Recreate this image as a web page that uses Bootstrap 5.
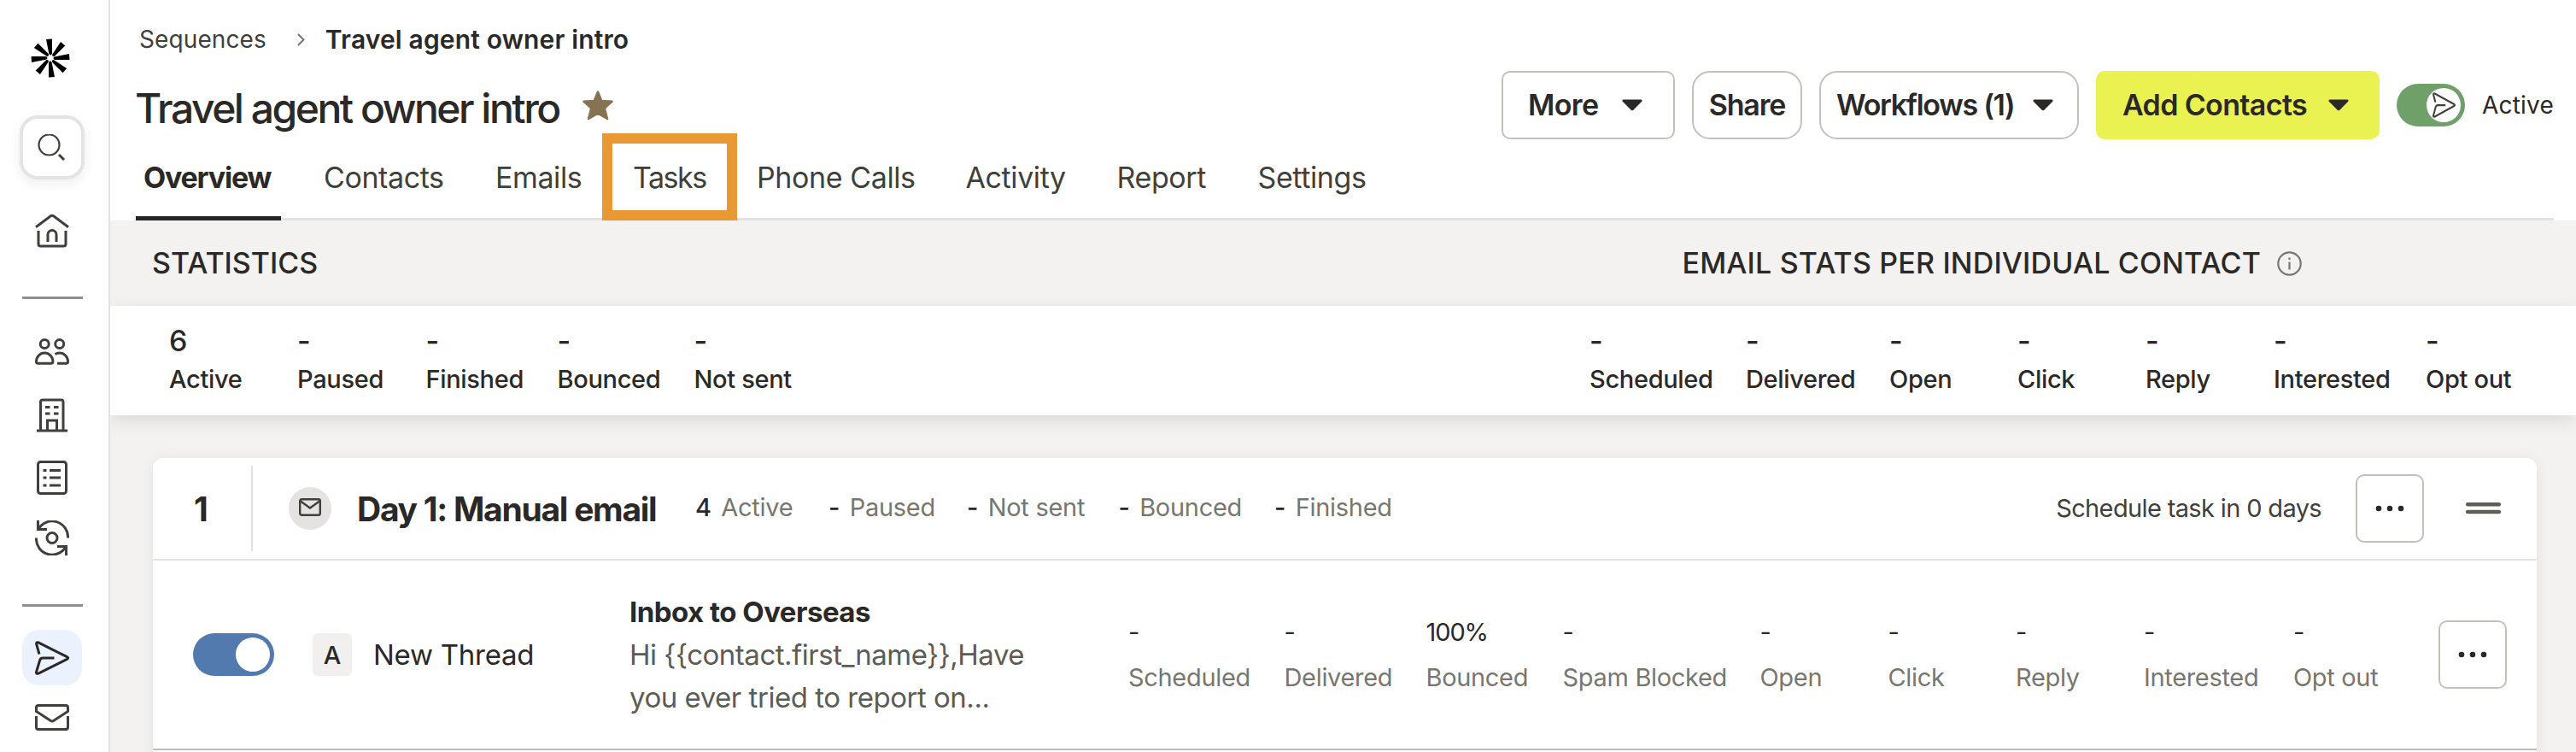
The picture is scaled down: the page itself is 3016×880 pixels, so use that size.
<!DOCTYPE html>
<html lang="en">
<head>
<meta charset="utf-8">
<title>Travel agent owner intro</title>
<link href="https://cdn.jsdelivr.net/npm/bootstrap@5.3.0/dist/css/bootstrap.min.css" rel="stylesheet">
<style>
  :root { --ink:#2a2927; --ink-soft:#3f3f3b; --muted:#77776f; --line:#e2e2e0; --edge:#c2c2bd; --band:#f3f2f0; }
  body { width:3016px; height:880px; overflow:hidden; background:var(--band); color:var(--ink);
         font-family:Inter,"Liberation Sans",sans-serif; font-size:29px; line-height:1; white-space:nowrap; }
  svg { display:block; flex:none; }
  .line-icon { fill:none; stroke:var(--ink-soft); stroke-width:3; }

  .rail { width:129px; border-right:2px solid var(--line); padding:45px 5px 0 0; }
  .rail-logo { margin-right:5px; }
  .rail-search { width:76px; height:75px; margin-top:44px; border:4px solid #e4e4e3; border-radius:21px; box-shadow:0 5px 14px rgba(0,0,0,.07); padding:18px 0 0 17px; }
  .rail-rule { width:71px; height:3px; background:#90908b; margin-top:57px; }
  .rail-active { width:70px; height:65px; border-radius:20px; background:#ebf2fd; margin-top:27px; }

  .topbar { height:258px; padding:0 26px 0 30px; }
  .trail { height:92px; padding-left:4px; font-size:28px; color:var(--ink-soft); letter-spacing:.1px; }
  .trail-now { font-size:30px; font-weight:600; color:var(--ink); letter-spacing:.15px; margin-left:24px; }
  .title-row { height:62px; }
  .page-title { font-size:48px; font-weight:500; letter-spacing:-2.5px; margin:7px 0 0 -1px; line-height:56px; }
  .actions { gap:20px; }
  .act { height:80px; border:2px solid var(--edge); border-radius:10px; font-size:34px; font-weight:600; background:#fff; }
  .act-round { border-radius:21px; }
  .act-more { width:203px; padding:0 36px 0 29px; letter-spacing:-.6px; }
  .act-share { width:129px; letter-spacing:-1.15px; }
  .act-flow { width:304px; padding:0 28px 0 18px; letter-spacing:-1.3px; }
  .act-add { width:332px; padding:0 34px 0 29px; background:#eaf251; border-color:#eaf251; letter-spacing:-.64px; }
  .pill { height:50px; border-radius:25px; padding:5px; }
  .pill-green { width:80px; background:#70a06a; }
  .pill-blue { width:95px; background:#527aae; }
  .knob { width:40px; height:40px; border-radius:50%; background:#fff; }
  .act-state { width:84px; font-size:28px; letter-spacing:.2px; }

  .tabs { display:grid; grid-template-columns:220px 201px 161px 145px 244.5px 177px 165px 1fr; height:104px; border-bottom:3px solid var(--line);
          font-size:34px; line-height:108px; color:var(--ink-soft); letter-spacing:-.4px; }
  .tab-on { width:170px; height:104px; padding-left:9px; font-weight:700; color:var(--ink); letter-spacing:-1.2px; box-shadow:inset 0 -5px #252523; }
  .tab-tight { letter-spacing:-1.5px; }
  .callout { position:absolute; left:-36px; top:2px; width:158px; height:102px; border:12px solid #e99934; }

  .band { height:100px; padding:0 321px 0 49px; font-size:34px; font-weight:500; }
  .band-mail { letter-spacing:.17px; gap:19px; }
  .totals { height:128px; padding:18px 74px 0 69px; font-weight:500; letter-spacing:-.33px; box-shadow:0 6px 20px rgba(0,0,0,.1); position:relative; }
  .totals b { display:block; font-size:34px; font-weight:500; line-height:45px; }
  .totals span { display:block; line-height:46px; }
  .cols-left { display:grid; grid-template-columns:150px 150.5px 154px 160px 120px; }
  .cols-right { display:grid; grid-template-columns:183px 168px 150px 150px 150px 178px 102px; }

  .step { margin:50px 46px 0 50px; height:380px; border-radius:12px; background:#fff; box-shadow:0 2px 16px rgba(0,0,0,.07); }
  .step-head { height:120px; border-bottom:2px solid var(--line); padding-right:42px; }
  .step-no { width:115px; font-size:39px; font-weight:700; padding-left:48px; }
  .vline { width:2px; height:100px; background:var(--line); margin-top:-1px; }
  .kind { width:50px; height:50px; border-radius:50%; background:#e4e3e2; margin-left:42px; }
  .step-name { font-size:39px; font-weight:700; letter-spacing:-1.27px; margin-left:30px; width:396px; }
  .tally { display:grid; grid-template-columns:156px 162px 177.5px 182.5px 140px; color:var(--muted); letter-spacing:-.28px; margin-top:-3px; }
  .tally b { font-weight:500; color:var(--ink); display:inline-block; margin-right:11.5px; }
  .when { color:var(--ink-soft); letter-spacing:-.64px; margin-right:40px; margin-top:-2px; }
  .square { width:80px; height:80px; border:2px solid var(--edge); border-radius:10px; }
  .grip { margin-left:49px; }

  .variant { height:222px; border-bottom:2px solid #bfbfbb; padding:0 35px 0 47px; }
  .letter { width:46px; height:50px; border-radius:6px; background:#f1f0ef; margin-left:45px; font-weight:500; }
  .thread { font-size:33px; letter-spacing:-.25px; width:300px; margin-left:25px; }
  .mail { width:584px; font-size:33px; line-height:50px; color:#5c5c57; letter-spacing:-.48px; }
  .mail strong { font-weight:700; color:var(--ink); letter-spacing:-.52px; }
  .rates { display:grid; grid-template-columns:182.5px 166px 160px 231px 150px 149.5px 150px 175px 170px; color:var(--muted); letter-spacing:-.32px; margin-top:-1px; }
  .rates b, .rates span { display:block; line-height:53px; }
  .rates b { font-weight:400; color:var(--ink); }
  .rates .full { letter-spacing:-1.1px; }
</style>
</head>
<body class="d-flex">
<nav class="rail bg-white flex-shrink-0 d-flex flex-column align-items-center position-relative z-1">
  <svg class="rail-logo" width="46" height="46" viewBox="0 0 46 46"><defs><path id="ray" d="M18 1 25 .5V16.5Q25 19.6 22.7 19.4 21.6 19.2 21.3 17.5Z"/></defs>
    <use href="#ray"/><use href="#ray" transform="rotate(45 23 23)"/><use href="#ray" transform="rotate(90 23 23)"/><use href="#ray" transform="rotate(135 23 23)"/><use href="#ray" transform="rotate(180 23 23)"/><use href="#ray" transform="rotate(225 23 23)"/><use href="#ray" transform="rotate(270 23 23)"/><use href="#ray" transform="rotate(315 23 23)"/></svg>
  <div class="rail-search bg-white"><svg class="line-icon" width="34" height="34" viewBox="0 0 34 34" style="stroke-width:2.2"><circle cx="13.5" cy="12.5" r="12"/><path d="M25 24 31 30" stroke-width="3"/></svg></div>
  <svg class="line-icon" style="margin-top:40px" width="40" height="40" viewBox="0 0 40 40"><path d="M1 15.8 18 3Q20 1.4 22 3L39 15.8M4 20V35.5Q4 38 6.5 38H33.500Q36 38 36 35.500V20M15 33V24.500a5 5 0 0 1 10 0V33"/></svg>
  <div class="rail-rule"></div>
  <svg class="line-icon" style="margin-top:46px" width="40" height="31" viewBox="0 0 40 31"><circle cx="11.200" cy="6.500" r="5"/><circle cx="28.700" cy="6.500" r="5"/><path d="M1.500 27a9.700 10 0 0 1 19.400 0q0 2.300-2 2.300H3.500q-2 0-2-2.300ZM23.500 18.500Q26 17 28.700 17A9.800 10 0 0 1 38.500 27q0 2.300-2 2.300H26"/></svg>
  <svg class="line-icon" style="margin-top:39px" width="36" height="40" viewBox="0 0 36 40"><path d="M4.500 38V4.500Q4.500 2 7 2H28.500Q31 2 31 4.500V38M0 38H36M12.500 38V26H23.500V38M10 10.500h5.500M20 10.500h5.500M10 18h5.500M20 18h5.500"/></svg>
  <svg class="line-icon" style="margin-top:33px" width="36" height="40" viewBox="0 0 36 40"><rect x="1.500" y="1.500" width="33" height="37" rx="3"/><path d="M7.500 11.500h4M15 11.500h13M7.500 20h4M15 20h13M7.500 29h4M15 29h13"/></svg>
  <svg class="line-icon" style="margin-top:30px" width="40" height="41" viewBox="0 0 40 41"><circle cx="20" cy="20.500" r="6"/><path d="M3.500 0V10.500H14M3.800 10.500A18.500 18.500 0 0 1 38.500 20.500M36.500 41V30.500H26M36.200 30.500A18.500 18.500 0 0 1 1.500 20.500"/></svg>
  <div class="rail-rule"></div>
  <div class="rail-active d-flex align-items-center justify-content-center"><svg class="line-icon" width="40" height="40" viewBox="0 0 40 40" style="stroke:#2a2927"><path id="plane" d="M5 15.500 1.700 4Q1.200 1 4 2L37.500 18.700Q39.800 20 37.500 21.300L4 38Q1 39 1.600 36L5.500 23Q6.300 20 9 20H22.500"/></svg></div>
  <svg class="line-icon" style="margin-top:22px" width="40" height="31" viewBox="0 0 40 31"><path d="M1.500 8.500V4Q1.500 1.500 4 1.500H36Q38.500 1.500 38.500 4V8.500L21.500 19.500Q20 20.500 18.500 19.500ZM1.500 14V27Q1.500 29.500 4 29.500H36Q38.500 29.500 38.500 27V14"/></svg>
</nav>

<main class="flex-grow-1">
  <header class="topbar bg-white">
    <div class="trail d-flex align-items-center">Sequences
      <svg class="line-icon" style="margin-left:36px;stroke:#77776f;stroke-width:2" width="9" height="15" viewBox="0 0 9 15"><path d="M1 1 7.500 7.500 1 14"/></svg>
      <span class="trail-now">Travel agent owner intro</span>
    </div>
    <div class="title-row d-flex align-items-center justify-content-between">
      <div class="d-flex align-items-center">
        <h1 class="page-title">Travel agent owner intro</h1>
        <svg style="margin-left:27px" width="36" height="35" viewBox="0 0 36 35"><path fill="#857352" stroke="#857352" stroke-width="2.500" stroke-linejoin="round" d="M18 1.500 22.300 12 34.500 12.800 25.800 20.500 29 33 18 26.600 7 33 10.200 20.500 1.500 12.800 13.700 12Z"/></svg>
      </div>
      <div class="actions d-flex align-items-center">
        <div class="act act-more d-flex align-items-center justify-content-between">More<svg width="24" height="14" viewBox="0 0 24 14"><path id="caret" fill="#2a2927" d="M2 .5H22Q24.500.7 23 3L13.300 12.700Q12 13.800 10.700 12.700L1 3Q-.5.700 2 .5Z"/></svg></div>
        <div class="act act-round act-share d-flex align-items-center justify-content-center">Share</div>
        <div class="act act-round act-flow d-flex align-items-center justify-content-between">Workflows (1)<svg width="24" height="14" viewBox="0 0 24 14"><use href="#caret"/></svg></div>
        <div class="act act-add d-flex align-items-center justify-content-between">Add Contacts<svg width="24" height="14" viewBox="0 0 24 14"><use href="#caret"/></svg></div>
        <div class="pill pill-green d-flex justify-content-end"><div class="knob d-flex align-items-center justify-content-center"><svg class="line-icon" width="27" height="30" viewBox="0 0 40 40" preserveAspectRatio="none"><use href="#plane"/></svg></div></div>
        <div class="act-state">Active</div>
      </div>
    </div>
    <nav class="tabs">
      <div class="tab-on">Overview</div><div>Contacts</div><div>Emails</div>
      <div class="tab-tight position-relative">Tasks<span class="callout"></span></div>
      <div>Phone Calls</div><div>Activity</div><div>Report</div><div>Settings</div>
    </nav>
  </header>

  <div class="band d-flex align-items-center justify-content-between">
    <div>STATISTICS</div>
    <div class="band-mail d-flex align-items-center">EMAIL STATS PER INDIVIDUAL CONTACT
      <svg width="29" height="29" viewBox="0 0 29 29" fill="none" stroke="#77776f" stroke-width="2.200"><circle cx="14.500" cy="14.500" r="13.200"/><path d="M14.500 12.500V21.500M14.500 7.500V10"/></svg></div>
  </div>

  <section class="totals bg-white d-flex justify-content-between">
    <div class="cols-left">
      <div><b>6</b><span>Active</span></div><div><b>-</b><span>Paused</span></div><div><b>-</b><span>Finished</span></div><div><b>-</b><span>Bounced</span></div><div><b>-</b><span>Not sent</span></div>
    </div>
    <div class="cols-right">
      <div><b>-</b><span>Scheduled</span></div><div><b>-</b><span>Delivered</span></div><div><b>-</b><span>Open</span></div><div><b>-</b><span>Click</span></div><div><b>-</b><span>Reply</span></div><div><b>-</b><span>Interested</span></div><div><b>-</b><span>Opt out</span></div>
    </div>
  </section>

  <section class="step">
    <div class="step-head d-flex align-items-center">
      <div class="step-no">1</div>
      <div class="vline"></div>
      <div class="kind d-flex align-items-center justify-content-center"><svg class="line-icon" style="stroke-width:2.400;margin-top:-3px" width="26" height="21" viewBox="0 0 26 21"><rect x="1.200" y="1.200" width="23.600" height="18.600" rx="2"/><path d="M2 3.500 13 11.500 24 3.500"/></svg></div>
      <div class="step-name">Day 1: Manual email</div>
      <div class="tally"><div><b>4</b>Active</div><div><b>-</b>Paused</div><div><b>-</b>Not sent</div><div><b>-</b>Bounced</div><div><b>-</b>Finished</div></div>
      <div class="when ms-auto">Schedule task in 0 days</div>
      <div class="square d-flex align-items-center justify-content-center"><svg width="34" height="8" viewBox="0 0 34 8" fill="#2a2927"><circle cx="4" cy="4" r="3.300"/><circle cx="17" cy="4" r="3.300"/><circle cx="30" cy="4" r="3.300"/></svg></div>
      <svg class="grip" width="41" height="14" viewBox="0 0 41 14" fill="#5e5d57"><rect width="41" height="4.500" rx="2"/><rect y="8.800" width="41" height="4.500" rx="2"/></svg>
    </div>
    <div class="variant d-flex align-items-center">
      <div class="pill pill-blue d-flex justify-content-end"><div class="knob"></div></div>
      <div class="letter d-flex align-items-center justify-content-center">A</div>
      <div class="thread">New Thread</div>
      <div class="mail"><strong>Inbox to Overseas</strong><br>Hi {{contact.first_name}},Have<br>you ever tried to report on...</div>
      <div class="rates">
        <div><b>-</b><span>Scheduled</span></div><div><b>-</b><span>Delivered</span></div><div><b class="full">100%</b><span>Bounced</span></div><div><b>-</b><span>Spam Blocked</span></div><div><b>-</b><span>Open</span></div><div><b>-</b><span>Click</span></div><div><b>-</b><span>Reply</span></div><div><b>-</b><span>Interested</span></div><div><b>-</b><span>Opt out</span></div>
      </div>
      <div class="square ms-auto d-flex align-items-center justify-content-center"><svg width="34" height="8" viewBox="0 0 34 8" fill="#2a2927"><circle cx="4" cy="4" r="3.300"/><circle cx="17" cy="4" r="3.300"/><circle cx="30" cy="4" r="3.300"/></svg></div>
    </div>
  </section>
</main>
<script src="https://cdn.jsdelivr.net/npm/bootstrap@5.3.0/dist/js/bootstrap.bundle.min.js"></script>
</body>
</html>
